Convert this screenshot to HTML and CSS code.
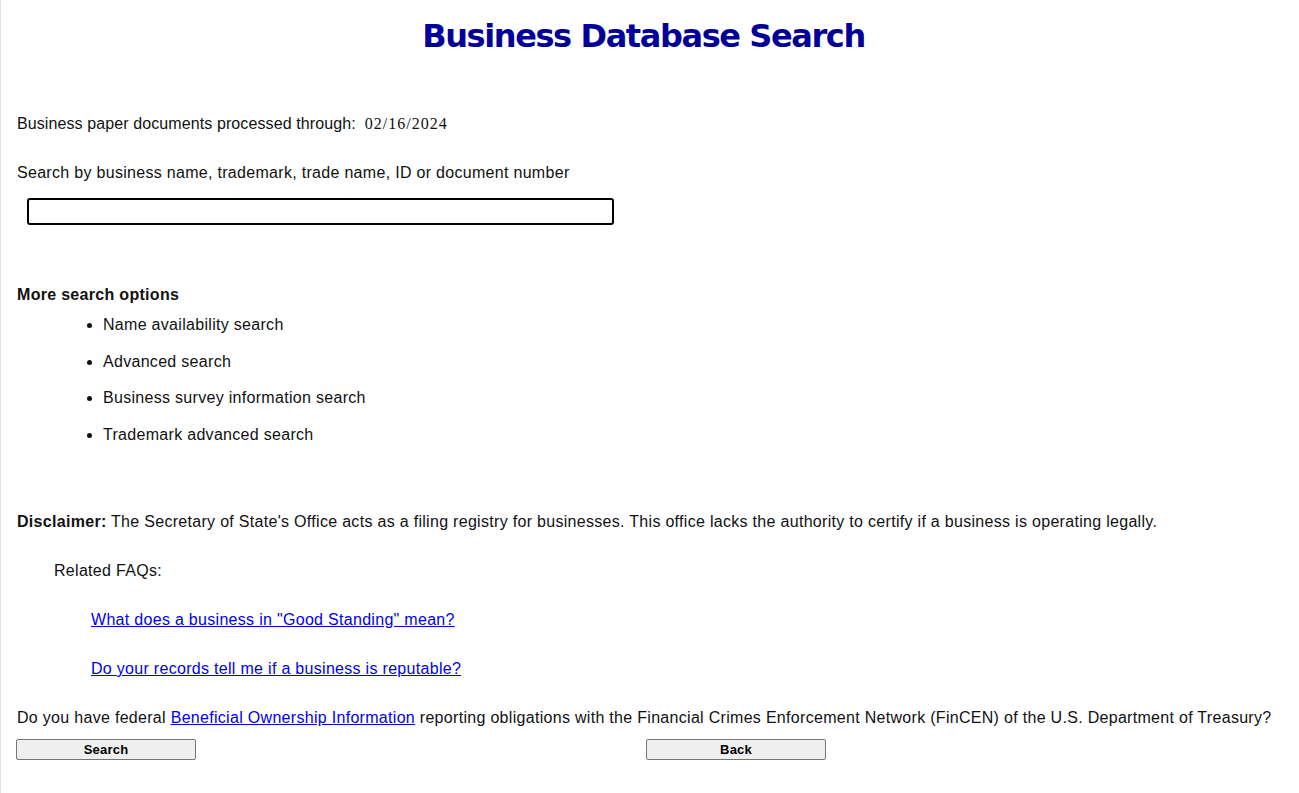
FILE: index.html
```html
<!DOCTYPE html>
<html lang="en">
<head>
<meta charset="utf-8">
<title>Business Database Search</title>
<link rel="stylesheet" href="styles.css">
</head>
<body>
<div class="page">
  <h1 class="title">Business Database Search</h1>
  <p class="line processed">Business paper documents processed through:&nbsp; <span class="date">02/16/2024</span></p>
  <label class="line search-label" for="q">Search by business name, trademark, trade name, ID or document number</label>
  <div class="input-row"><input id="q" class="search-input" type="text" autofocus></div>
  <p class="line options-head">More search options</p>
  <ul class="options">
    <li>Name availability search</li>
    <li>Advanced search</li>
    <li>Business survey information search</li>
    <li>Trademark advanced search</li>
  </ul>
  <p class="line disclaimer"><b>Disclaimer:</b> The Secretary of State's Office acts as a filing registry for businesses. This office lacks the authority to certify if a business is operating legally.</p>
  <p class="line faqs">Related FAQs:</p>
  <p class="line faq-link"><a href="#">What does a business in "Good Standing" mean?</a></p>
  <p class="line faq-link"><a href="#">Do your records tell me if a business is reputable?</a></p>
  <p class="line boi">Do you have federal <a href="#">Beneficial Ownership Information</a> reporting obligations with the Financial Crimes Enforcement Network (FinCEN) of the U.S. Department of Treasury?</p>
  <div class="buttons">
    <div><button class="btn" type="button">Search</button></div>
    <div><button class="btn" type="button">Back</button></div>
  </div>
</div>
</body>
</html>
```
FILE: styles.css
```css
html {
  background: #fff;
}
body {
  margin: 0;
  min-height: 793px;
  border-left: 1px solid #e3e3e3;
  box-sizing: border-box;
  font-family: "Liberation Sans", Arial, sans-serif;
  font-size: 16px;
  line-height: 18px;
  letter-spacing: 0.3px;
  color: #111;
}
.page {
  padding: 0 15px 0 16px;
  display: flex;
  flex-direction: column;
  align-items: flex-start;
}
.title {
  align-self: stretch;
  text-align: center;
  font-family: Verdana, "DejaVu Sans", sans-serif;
  font-weight: bold;
  font-size: 32px;
  line-height: 38px;
  letter-spacing: -1.4px;
  color: #000099;
  margin: 17px 0 0 0;
  padding-right: 14px;
}
.line {
  margin: 0;
  display: block;
}
.processed {
  margin-top: 60px;
  letter-spacing: 0.1px;
}
.date {
  font-family: "Liberation Serif", "Times New Roman", serif;
  letter-spacing: 1px;
}
.search-label {
  margin-top: 31px;
}
.input-row {
  margin-top: 16px;
  padding-left: 10px;
}
.search-input {
  display: block;
  width: 587px;
  height: 27px;
  box-sizing: border-box;
  border: 2px solid #000;
  border-radius: 3px;
  outline: none;
  padding: 0 3px;
  font-family: "Liberation Sans", Arial, sans-serif;
  font-size: 14px;
  caret-color: #000;
}
.options-head {
  margin-top: 61px;
  font-weight: bold;
}
.options {
  margin: 12px 0 0 0;
  padding-left: 86px;
  list-style: disc;
  display: flex;
  flex-direction: column;
  gap: 18.7px;
}
.options li {
  line-height: 18px;
}
.disclaimer {
  margin-top: 69px;
}
.faqs {
  margin-top: 31px;
  padding-left: 37px;
}
.faq-link {
  margin-top: 31px;
  padding-left: 74px;
}
a {
  color: #0000ee;
  text-decoration: underline;
}
.boi {
  margin-top: 31px;
}
.buttons {
  margin-top: 12px;
  margin-left: -1px;
  display: grid;
  grid-template-columns: 630px 180px;
}
.btn {
  width: 180px;
  height: 21px;
  background: #efefef;
  border: 1px solid #767676;
  border-radius: 2px;
  font-family: "Liberation Sans", Arial, sans-serif;
  font-weight: bold;
  font-size: 13px;
  letter-spacing: 0.2px;
  color: #000;
  padding: 0;
}
```
